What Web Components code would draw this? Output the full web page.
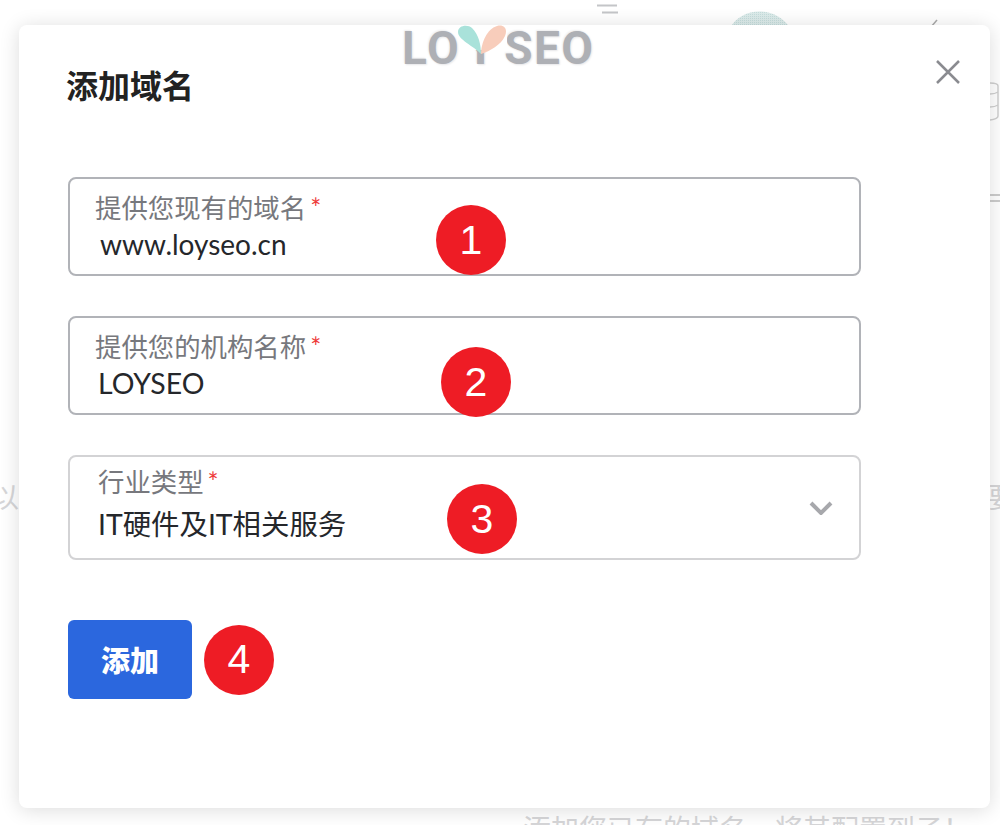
<!DOCTYPE html>
<html lang="zh-CN">
<head>
  <meta charset="UTF-8">
  <title>添加域名</title>
  <style>
    html, body { margin: 0; height: 825px; overflow: hidden; background: #fff; }
    body { position: relative; font-family: Lato, "Noto Sans CJK SC", sans-serif; }
  </style>
</head>
<body>
  <page-backdrop></page-backdrop>
  <domain-dialog heading="添加域名">
    <form-field label="提供您现有的域名" value="www.loyseo.cn" value-x="32" value-size="28" step="1" step-x="368" step-y="28"></form-field>
    <form-field label="提供您的机构名称" value="LOYSEO" value-x="30" step="2" step-x="373" step-y="31"></form-field>
    <form-field label="行业类型" value="IT硬件及IT相关服务" select label-x="28" value-x="30" step="3" step-x="379" step-y="29"></form-field>
    <div slot="actions">
      <primary-button>添加</primary-button>
      <step-badge>4</step-badge>
    </div>
  </domain-dialog>

  <script type="text/javascript">
    // the page behind the dialog, only scraps of it are visible
    class PageBackdrop extends HTMLElement {
      constructor() {
        super();
        this.attachShadow({ mode: 'open' }).innerHTML = `
          <style>
            :host { display: block; position: absolute; inset: 0; overflow: hidden; color: #d6d6d8; }
            span { position: absolute; font: 28px/36px "Noto Sans CJK SC", sans-serif; white-space: nowrap; }
            svg { position: absolute; left: 0; top: 0; }
          </style>
          <svg width="1000" height="825" fill="none">
            <defs>
              <pattern id="dots" width="2" height="2" patternUnits="userSpaceOnUse">
                <rect width="2" height="2" fill="#dcebea"/>
                <rect width="1" height="1" fill="#c4dcdb"/>
              </pattern>
            </defs>
            <path d="M597 5.500h20M602 12.500h16" stroke="#c4c5c8" stroke-width="2"/>
            <path d="M730 28c12-22 46-22 60 0z" fill="url(#dots)"/>
            <path d="M931 27l6-7" stroke="#aaa" stroke-width="1.500"/>
            <path d="M990 83q8 0 8 3v30q0 3-8 4M990 94q5 0 8-2M990 107q5 0 8-2" stroke="#cfcfcf" stroke-width="1.500"/>
            <path d="M990 195h10M990 201h10" stroke="#ccc" stroke-width="2"/>
          </svg>
          <span style="left:-9px;top:478px">以</span>
          <span style="left:988px;top:478px">要</span>
          <span style="left:523px;top:810px">添加您已有的域名，将其配置到子！</span>
        `;
      }
    }

    class DomainDialog extends HTMLElement {
      constructor() {
        super();
        this.attachShadow({ mode: 'open' }).innerHTML = `
          <style>
            :host {
              display: block;
              position: absolute;
              left: 19px;
              top: 25px;
              width: 971px;
              height: 783px;
              box-sizing: border-box;
              padding: 41px 0 0 49px;
              background: #fff;
              border-radius: 8px;
              box-shadow: 0 2px 20px rgba(0, 0, 0, .14);
            }
            h1 {
              margin: 0 0 71px -2px;
              font: 700 32px/40px Lato, "Noto Sans CJK SC", sans-serif;
              color: #222;
            }
            .fields { display: flex; flex-direction: column; gap: 40px; width: 793px; }
            .actions { margin-top: 60px; }
            ::slotted([slot="actions"]) { display: flex; align-items: center; gap: 12px; }
            .close { position: absolute; right: 30px; top: 35px; }
            brand-logo { position: absolute; left: 383px; top: 0; }
          </style>
          <brand-logo></brand-logo>
          <svg class="close" width="24" height="24" viewBox="0 0 24 24" fill="none" stroke="#8a8b90" stroke-width="2.500">
            <path d="M1 1l22 22M23 1L1 23"/>
          </svg>
          <h1></h1>
          <div class="fields"><slot></slot></div>
          <div class="actions"><slot name="actions"></slot></div>
        `;
        this.shadowRoot.querySelector('h1').textContent = this.getAttribute('heading');
      }
    }

    class BrandLogo extends HTMLElement {
      constructor() {
        super();
        this.attachShadow({ mode: 'open' }).innerHTML = `
          <style>
            :host { display: block; width: 200px; height: 46px; }
            .word {
              font: 700 46px/46px Roboto, "Liberation Sans", sans-serif;
              color: #aeb0b5;
              letter-spacing: 1.500px;
              text-shadow: 1px 1px 2px #e6e6e8, -1px -1px 2px #eeeeef;
              white-space: nowrap;
            }
            .word b { font-weight: 700; margin: 0 8px 0 6px; }
            svg { position: absolute; left: 54px; top: 0; }
          </style>
          <div class="word">LO<b>Y</b>SEO</div>
          <svg width="54" height="32" viewBox="0 0 54 32">
            <rect x="3" y="0" width="48" height="25" fill="#fff"/>
            <path d="M25 29C18 21 2 15 2 7 2 0 12-1 16 3 23 10 25 20 25 29z" fill="#a9e2da"/>
            <path d="M25 29C25 18 31 4 41 1 48-1 52 4 49 11 45 20 34 26 25 29z" fill="#f8cdbb"/>
          </svg>
        `;
      }
    }

    class FormField extends HTMLElement {
      constructor() {
        super();
        const select = this.hasAttribute('select');
        this.attachShadow({ mode: 'open' }).innerHTML = `
          <style>
            :host {
              display: block;
              position: relative;
              box-sizing: border-box;
              height: ${select ? 105 : 99}px;
              padding-top: ${select ? 8 : 12}px;
              border: 2px solid ${select ? '#d3d3d5' : '#b1b3b8'};
              border-radius: 8px;
              background: #fff;
            }
            .label { font-size: 26.400px; line-height: 34px; color: #77787d; white-space: nowrap; }
            .label i { font-style: normal; color: #ee3a3a; font-size: 26px; line-height: 0; margin-left: 4px; }
            .value { font-size: 28.400px; line-height: ${select ? 50 : 38}px; color: #25272b; white-space: nowrap; }
            .chevron { position: absolute; right: 26px; top: 44px; }
            step-badge { position: absolute; }
          </style>
          <div class="label"></div>
          <div class="value"></div>
        `;
        const root = this.shadowRoot;
        const label = root.querySelector('.label');
        const value = root.querySelector('.value');
        label.textContent = this.getAttribute('label');
        label.insertAdjacentHTML('beforeend', '<i>*</i>');
        label.style.paddingLeft = (this.getAttribute('label-x') || 25) + 'px';
        value.textContent = this.getAttribute('value');
        value.style.paddingLeft = this.getAttribute('value-x') - 2 + 'px';
        if (this.hasAttribute('value-size')) value.style.fontSize = this.getAttribute('value-size') + 'px';

        if (select) {
          const holder = document.createElement('div');
          holder.innerHTML = '<svg class="chevron" width="24" height="14" viewBox="0 0 24 14" fill="none" stroke="#a7a8ac" stroke-width="4"><path d="M2 2l10 10L22 2"/></svg>';
          root.appendChild(holder.firstChild);
        }

        const badge = document.createElement('step-badge');
        badge.textContent = this.getAttribute('step');
        badge.style.left = this.getAttribute('step-x') - 2 + 'px';
        badge.style.top = this.getAttribute('step-y') - 2 + 'px';
        root.appendChild(badge);
      }
    }

    class StepBadge extends HTMLElement {
      constructor() {
        super();
        this.attachShadow({ mode: 'open' }).innerHTML = `
          <style>
            :host {
              display: flex;
              align-items: center;
              justify-content: center;
              width: 70px;
              height: 70px;
              border-radius: 50%;
              background: #ee1c25;
              color: #fff;
              font: 41px/1 "Liberation Sans", Arial, sans-serif;
            }
          </style>
          <slot></slot>
        `;
      }
    }

    class PrimaryButton extends HTMLElement {
      constructor() {
        super();
        this.attachShadow({ mode: 'open' }).innerHTML = `
          <style>
            :host {
              display: flex;
              align-items: center;
              justify-content: center;
              width: 124px;
              height: 79px;
              border-radius: 6px;
              background: #2b67de;
              color: #fff;
              font: 900 29px/1 "Noto Sans CJK SC", sans-serif;
            }
          </style>
          <slot></slot>
        `;
      }
    }

    customElements.define('page-backdrop', PageBackdrop);
    customElements.define('brand-logo', BrandLogo);
    customElements.define('step-badge', StepBadge);
    customElements.define('primary-button', PrimaryButton);
    customElements.define('form-field', FormField);
    customElements.define('domain-dialog', DomainDialog);
  </script>
</body>
</html>
